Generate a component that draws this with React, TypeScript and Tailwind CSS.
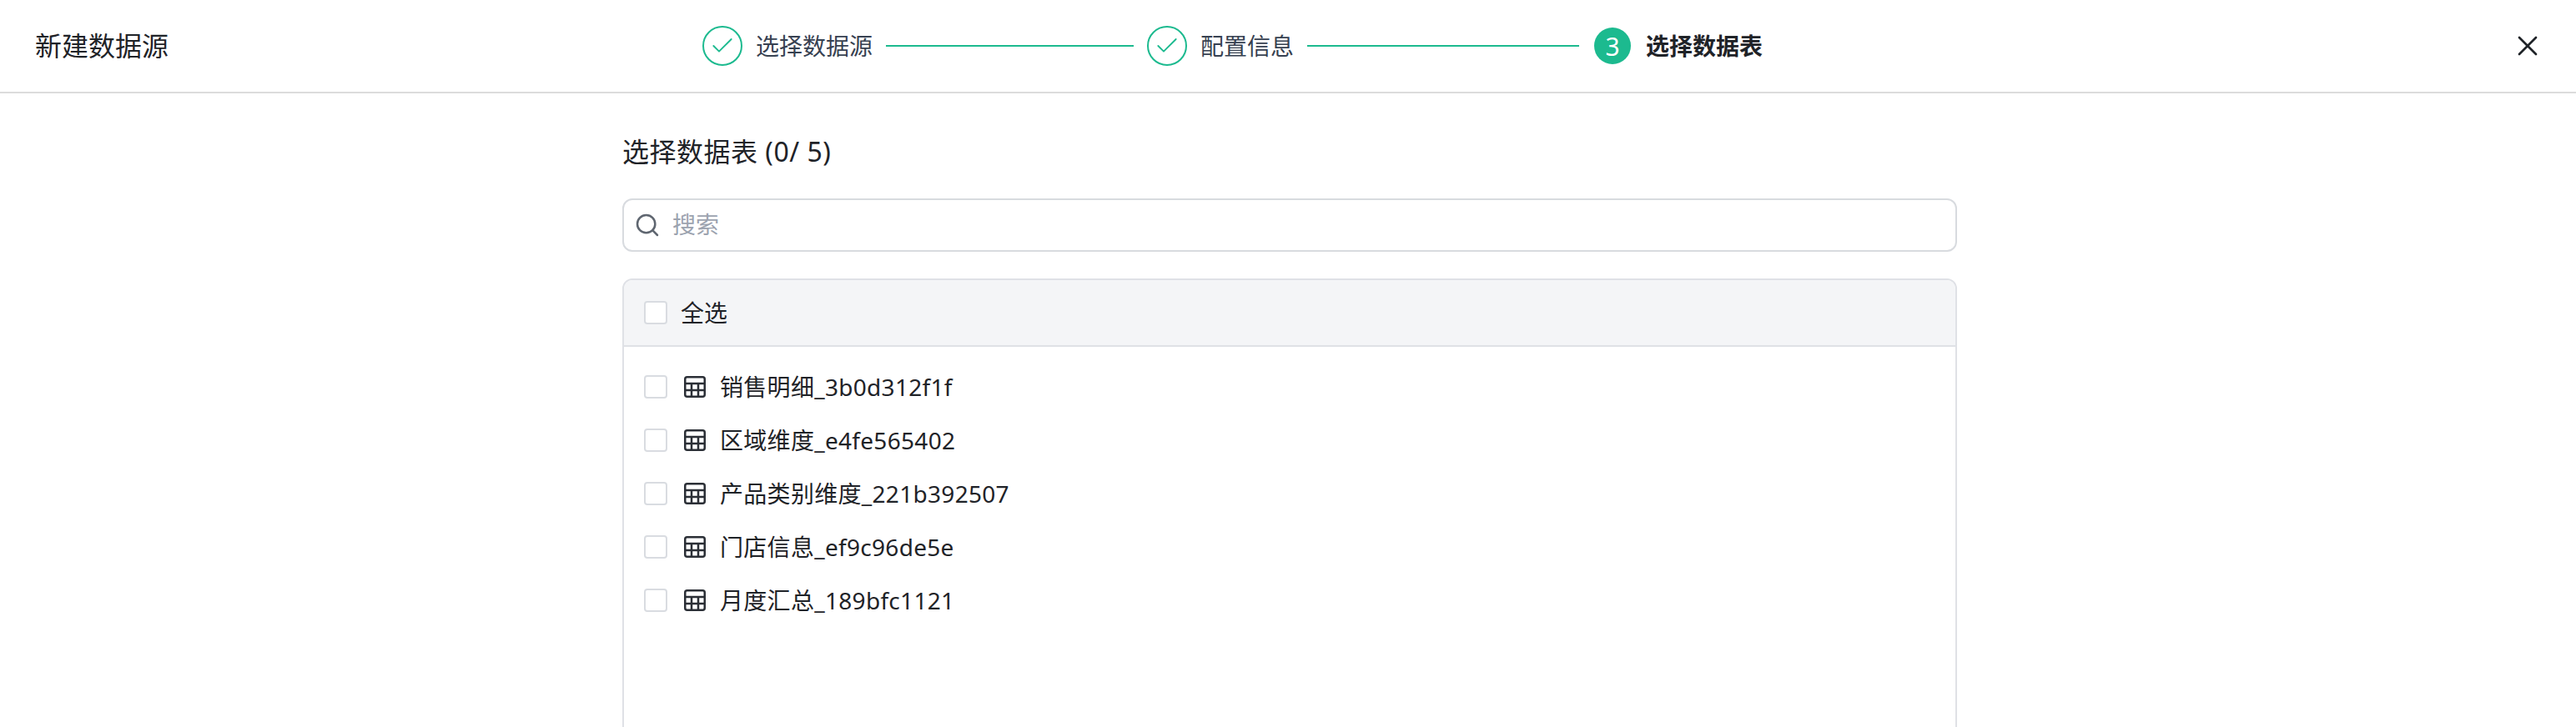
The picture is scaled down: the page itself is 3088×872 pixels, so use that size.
import { Check, Search, X } from 'lucide-react';

const font = { fontFamily: '"Noto Sans", "Noto Sans CJK SC", sans-serif' };

const tables = [
  '销售明细_3b0d312f1f',
  '区域维度_e4fe565402',
  '产品类别维度_221b392507',
  '门店信息_ef9c96de5e',
  '月度汇总_189bfc1121',
];

function DoneStep({ label }: { label: string }) {
  return (
    <div className="flex items-center gap-[16px]">
      <div className="flex h-[48px] w-[48px] items-center justify-center rounded-full border-2 border-[#1cba8f] text-[#1cba8f]">
        <Check size={32} strokeWidth={1.4} />
      </div>
      <span className="text-[28px] text-[#374151]">{label}</span>
    </div>
  );
}

function TableIcon() {
  return (
    <svg width="26" height="26" viewBox="0 0 26 26" fill="none" stroke="#2b2f36" strokeWidth="2.5" className="ml-[20px] shrink-0">
      <rect x="1.25" y="1.25" width="23.5" height="23.5" rx="2.5" />
      <path d="M1 9h24M1 17h24M9 9v16M17 9v16" />
    </svg>
  );
}

export default function App() {
  return (
    <div className="h-[872px] overflow-hidden bg-white text-[#1f2328]" style={font}>
      {/* Header */}
      <header className="flex h-[112px] items-center border-b-2 border-[#dcdcdc] pl-[42px] pr-[38px]">
        <h1 className="w-[800px] text-[32px] font-normal">新建数据源</h1>
        <div className="flex items-center">
          <DoneStep label="选择数据源" />
          <div className="mx-[16px] h-[2px] w-[297px] bg-[#1cba8f]" />
          <DoneStep label="配置信息" />
          <div className="ml-[16px] mr-[18px] h-[2px] w-[326px] bg-[#1cba8f]" />
          <div className="flex items-center gap-[18px]">
            <div className="flex h-[44px] w-[44px] items-center justify-center rounded-full bg-[#1cba8f] text-[30px] text-white">
              3
            </div>
            <span className="text-[28px] font-bold">选择数据表</span>
          </div>
        </div>
        <button className="ml-auto text-[#1f2328]">
          <X size={40} strokeWidth={1.6} />
        </button>
      </header>

      {/* Body */}
      <main className="flex justify-center pl-[4px]">
        <div className="w-[1600px] pt-[48px]">
          <h2 className="text-[32px] leading-[44px] font-normal tracking-[0.5px]">选择数据表 (0/ 5)</h2>

          <div className="mt-[34px] flex h-[64px] items-center rounded-[12px] border-2 border-[#d8dbdf] pb-[2px] pl-[12px]">
            <Search size={32} strokeWidth={1.9} className="mt-[2px] text-[#5f6670]" />
            <span className="ml-[14px] text-[28px] text-[#9ca3af]">搜索</span>
          </div>

          <div className="mt-[32px] h-[600px] rounded-t-[12px] border-2 border-[#dfe1e6]">
            <div className="flex h-[80px] items-center gap-[16px] rounded-t-[10px] border-b-2 border-[#dfe1e6] bg-[#f4f5f7] pl-[24px]">
              <span className="h-[28px] w-[28px] rounded-[4px] border-2 border-[#d9dce1] bg-white" />
              <span className="text-[28px]">全选</span>
            </div>
            <ul className="pt-[16px]">
              {tables.map((name) => (
                <li key={name} className="flex h-[64px] items-center pl-[24px]">
                  <span className="h-[28px] w-[28px] rounded-[4px] border-2 border-[#d9dce1] bg-white" />
                  <TableIcon />
                  <span className="ml-[17px] text-[28px] tracking-[0.3px]">{name}</span>
                </li>
              ))}
            </ul>
          </div>
        </div>
      </main>
    </div>
  );
}
